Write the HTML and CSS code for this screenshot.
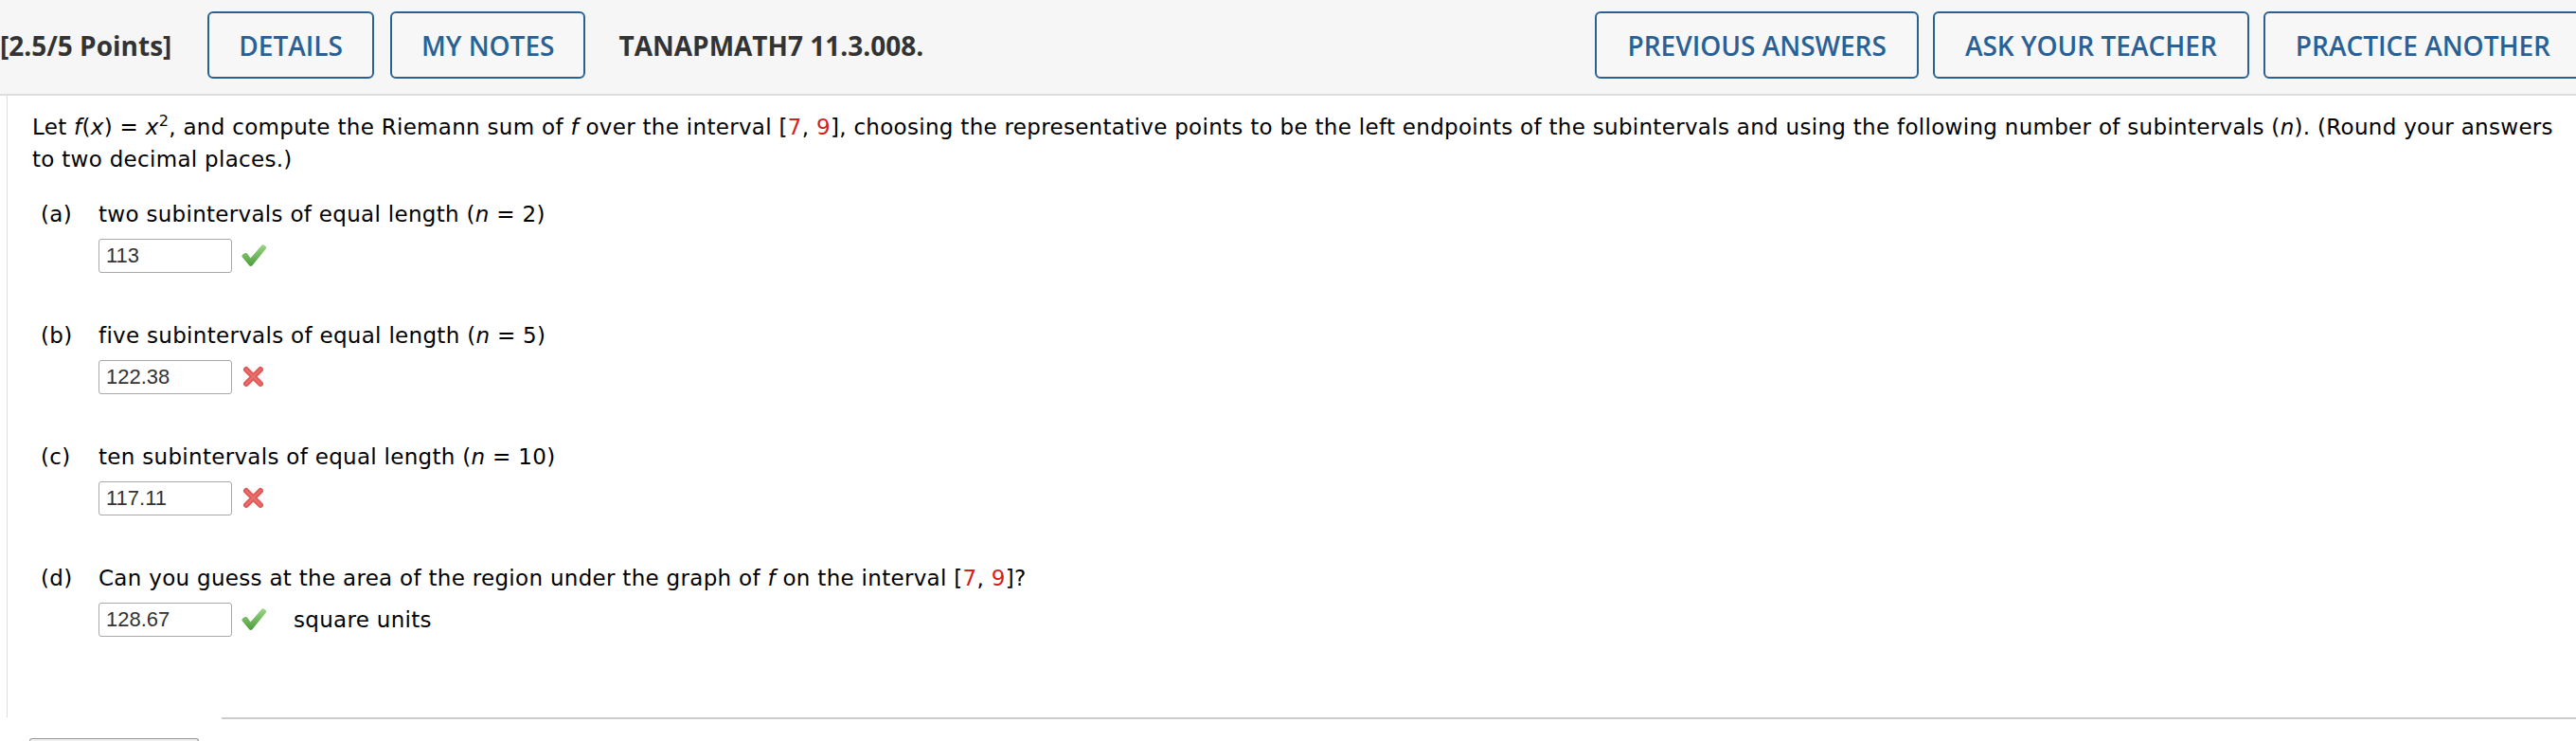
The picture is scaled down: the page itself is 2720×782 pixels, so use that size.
FILE: index.html
```html
<!DOCTYPE html>
<html>
<head>
<meta charset="utf-8">
<link rel="stylesheet" href="styles.css">
</head>
<body>
<div class="page">
  <header class="header">
    <div class="left-group">
      <span class="points">[2.5/5 Points]</span>
      <button class="btn details">DETAILS</button>
      <button class="btn notes">MY NOTES</button>
      <span class="qid">TANAPMATH7 11.3.008.</span>
    </div>
    <div class="right-group">
      <button class="btn">PREVIOUS ANSWERS</button>
      <button class="btn">ASK YOUR TEACHER</button>
      <button class="btn">PRACTICE ANOTHER</button>
    </div>
  </header>

  <main class="content">
    <p class="intro">Let <i>f</i>(<i>x</i>) = <i>x</i><sup>2</sup>, and compute the Riemann sum of <i>f</i> over the interval [<span class="red">7</span>, <span class="red">9</span>], choosing the representative points to be the left endpoints of the subintervals and using the following number of subintervals (<i>n</i>). (Round your answers to two decimal places.)</p>

    <div class="part">
      <span class="label">(a)</span>
      <span class="text">two subintervals of equal length (<i>n</i> = 2)</span>
      <div class="answer">
        <span class="field">113</span>
        <svg class="icon" viewBox="0 0 30 26" width="30" height="26"><defs><linearGradient id="g1" x1="0" y1="0" x2="0" y2="1"><stop offset="0" stop-color="#9ad585"/><stop offset="1" stop-color="#4a9e3c"/></linearGradient></defs><path d="M2.5 14 Q2 12.3 3.6 11.3 L5.8 10.1 Q7.3 9.5 8.3 10.8 L11.5 15.5 L23.2 2 Q24.5 0.8 25.9 1.8 L27.5 3 Q28.8 4.2 27.8 5.6 L13.4 23.2 Q11.8 24.8 10.2 23.2 Z" fill="url(#g1)"/></svg>
      </div>
    </div>

    <div class="part">
      <span class="label">(b)</span>
      <span class="text">five subintervals of equal length (<i>n</i> = 5)</span>
      <div class="answer">
        <span class="field">122.38</span>
        <svg class="icon" viewBox="0 0 30 26" width="30" height="26"><path d="M7 5 L22 20 M22 5 L7 20" stroke="#e05858" stroke-width="6" stroke-linecap="round"/><path d="M7 5 L22 20 M22 5 L7 20" stroke="#f08a8a" stroke-width="2" stroke-linecap="round" opacity="0.5"/></svg>
      </div>
    </div>

    <div class="part">
      <span class="label">(c)</span>
      <span class="text">ten subintervals of equal length (<i>n</i> = 10)</span>
      <div class="answer">
        <span class="field">117.11</span>
        <svg class="icon" viewBox="0 0 30 26" width="30" height="26"><path d="M7 5 L22 20 M22 5 L7 20" stroke="#e05858" stroke-width="6" stroke-linecap="round"/><path d="M7 5 L22 20 M22 5 L7 20" stroke="#f08a8a" stroke-width="2" stroke-linecap="round" opacity="0.5"/></svg>
      </div>
    </div>

    <div class="part">
      <span class="label">(d)</span>
      <span class="text">Can you guess at the area of the region under the graph of <i>f</i> on the interval [<span class="red">7</span>, <span class="red">9</span>]?</span>
      <div class="answer">
        <span class="field">128.67</span>
        <svg class="icon" viewBox="0 0 30 26" width="30" height="26"><defs><linearGradient id="g2" x1="0" y1="0" x2="0" y2="1"><stop offset="0" stop-color="#9ad585"/><stop offset="1" stop-color="#4a9e3c"/></linearGradient></defs><path d="M2.5 14 Q2 12.3 3.6 11.3 L5.8 10.1 Q7.3 9.5 8.3 10.8 L11.5 15.5 L23.2 2 Q24.5 0.8 25.9 1.8 L27.5 3 Q28.8 4.2 27.8 5.6 L13.4 23.2 Q11.8 24.8 10.2 23.2 Z" fill="url(#g2)"/></svg>
        <span class="unit">square units</span>
      </div>
    </div>
  </main>

  <footer class="footer">
    <div class="foot-left"><div class="submit"></div></div>
    <div class="foot-right"></div>
  </footer>
</div>
</body>
</html>
```

FILE: styles.css
```css
html, body {
  margin: 0;
  padding: 0;
  overflow: hidden;
  background: #fff;
}

.page {
  width: 2720px;
}

.header {
  width: 2760px;
  box-sizing: border-box;
  height: 101px;
  padding: 12px 33px 16px 0;
  display: flex;
  align-items: flex-start;
  justify-content: space-between;
  background: #f6f6f6;
  border-bottom: 2px solid #dddddd;
  font-family: "Open Sans", sans-serif;
}

.left-group, .right-group {
  display: flex;
  align-items: center;
  height: 71px;
}

.left-group .details { margin-left: 38px; }
.left-group .notes { margin-left: 17px; }
.left-group .btn { padding: 0 31px; }
.right-group { gap: 15px; }

.points, .qid {
  font-weight: 700;
  font-size: 28px;
  color: #333333;
  white-space: nowrap;
}

.qid { margin-left: 35px; }

.btn {
  height: 71px;
  box-sizing: border-box;
  padding: 0 32px;
  border: 2px solid #2a6195;
  border-radius: 6px;
  background: #f7f7f7;
  color: #2a6195;
  font-family: "Open Sans", sans-serif;
  font-weight: 600;
  font-size: 28px;
  white-space: nowrap;
}

.content {
  margin-left: 7px;
  border-left: 1px solid #dddddd;
  padding: 16px 10px 85px 26px;
  font-family: Verdana, "DejaVu Sans", sans-serif;
  font-size: 23px;
  letter-spacing: 0.3px;
  line-height: 34px;
  color: #000;
}

.intro {
  margin: 0 0 24px 0;
}

sup {
  font-size: 0.7em;
  line-height: 0;
  vertical-align: 0.55em;
}

.red { color: #d0231b; }

.part {
  display: grid;
  grid-template-columns: 61px 1fr;
  margin-left: 9px;
  margin-bottom: 49px;
}

.part:last-child { margin-bottom: 0; }

.label { grid-column: 1; }
.text { grid-column: 2; }

.answer {
  grid-column: 2;
  margin-top: 9px;
  display: flex;
  align-items: center;
  height: 36px;
}

.field {
  box-sizing: border-box;
  width: 141px;
  height: 36px;
  border: 1px solid #a9a9a9;
  border-radius: 3px;
  padding: 0 7px;
  font-family: "Liberation Sans", Arial, sans-serif;
  font-size: 22px;
  letter-spacing: 0;
  line-height: 34px;
  color: #333;
  background: #fff;
}

.icon {
  margin-left: 8px;
  display: block;
}

.unit {
  margin-left: 27px;
}

.footer {
  display: flex;
  height: 40px;
}

.foot-left {
  width: 234px;
  flex: none;
}

.submit {
  margin: 22px 0 0 31px;
  width: 179px;
  height: 30px;
  box-sizing: border-box;
  border: 1px solid #999;
  border-bottom: none;
  border-radius: 3px 3px 0 0;
  background: #eeeeee;
}

.foot-right {
  flex: 1;
  border-top: 2px solid #cccccc;
}
```
